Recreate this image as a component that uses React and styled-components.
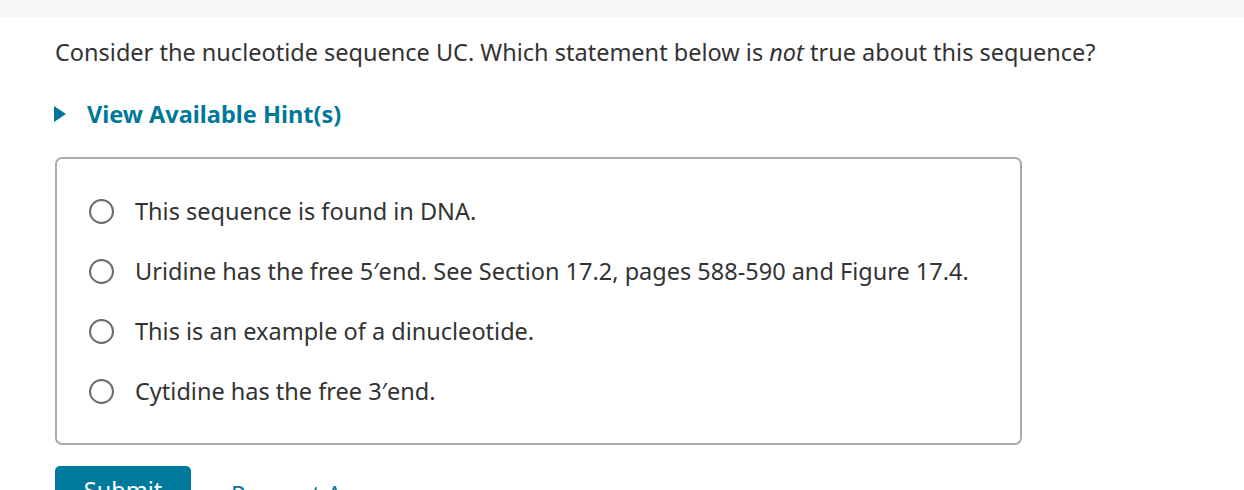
import React, { useState } from 'react';
import styled, { createGlobalStyle } from 'styled-components';

const GlobalStyle = createGlobalStyle`
  html, body {
    margin: 0;
    padding: 0;
    background: #ffffff;
    font-family: "Noto Sans", "Liberation Sans", sans-serif;
    color: #333333;
  }
`;

const TopBar = styled.div`
  height: 17px;
  background: #f7f7f7;
`;

const Content = styled.div`
  padding: 0 0 0 55px;
  width: 967px;
`;

const Question = styled.p`
  margin: 0;
  padding-top: 17px;
  font-size: 23.5px;
  line-height: 36px;
  color: #333333;
  white-space: nowrap;
`;

const HintToggle = styled.button`
  display: flex;
  align-items: center;
  gap: 21px;
  margin: 29px 0 0 -1px;
  padding: 0;
  border: none;
  background: none;
  color: #00789a;
  font-family: inherit;
  font-size: 23.5px;
  font-weight: bold;
  line-height: 30px;
  cursor: pointer;
`;

const Caret = styled.span`
  width: 0;
  height: 0;
  border-top: 8px solid transparent;
  border-bottom: 8px solid transparent;
  border-left: 12px solid #00789a;
`;

const OptionsBox = styled.div`
  margin-top: 28px;
  box-sizing: border-box;
  height: 288px;
  border: 2px solid #aaaaaa;
  border-radius: 7px;
  padding: 22px 0 0 32px;
  display: flex;
  flex-direction: column;
`;

const OptionRow = styled.label`
  display: flex;
  align-items: center;
  gap: 21px;
  height: 60px;
  font-size: 23.5px;
  color: #333333;
  cursor: pointer;
`;

const Radio = styled.span`
  box-sizing: border-box;
  width: 25px;
  height: 25px;
  border-radius: 50%;
  border: 2px solid ${(p) => (p.checked ? '#00789a' : '#6b6b6b')};
  flex-shrink: 0;
`;

const Actions = styled.div`
  display: flex;
  align-items: flex-start;
  gap: 40px;
  margin-top: 21px;
`;

const SubmitButton = styled.button`
  width: 136px;
  height: 44px;
  border: none;
  border-radius: 5px;
  background: #007a9c;
  color: #ffffff;
  font-family: inherit;
  font-size: 23.5px;
  padding-top: 4px;
`;

const LinkButton = styled.button`
  border: none;
  background: none;
  padding: 12px 0 0;
  color: #00789a;
  font-family: inherit;
  font-size: 23.5px;
`;

const options = [
  'This sequence is found in DNA.',
  'Uridine has the free 5\u2032end. See Section 17.2, pages 588-590 and Figure 17.4.',
  'This is an example of a dinucleotide.',
  'Cytidine has the free 3\u2032end.',
];

function App() {
  const [selected, setSelected] = useState(null);

  return (
    <>
      <GlobalStyle />
      <TopBar />
      <Content>
        <Question>
          Consider the nucleotide sequence UC. Which statement below is <i>not</i> true about this sequence?
        </Question>
        <HintToggle>
          <Caret />
          View Available Hint(s)
        </HintToggle>
        <OptionsBox>
          {options.map((text, i) => (
            <OptionRow key={i} onClick={() => setSelected(i)}>
              <Radio checked={selected === i} />
              {text}
            </OptionRow>
          ))}
        </OptionsBox>
        <Actions>
          <SubmitButton>Submit</SubmitButton>
          <LinkButton>Request Answer</LinkButton>
        </Actions>
      </Content>
    </>
  );
}

export default App;
